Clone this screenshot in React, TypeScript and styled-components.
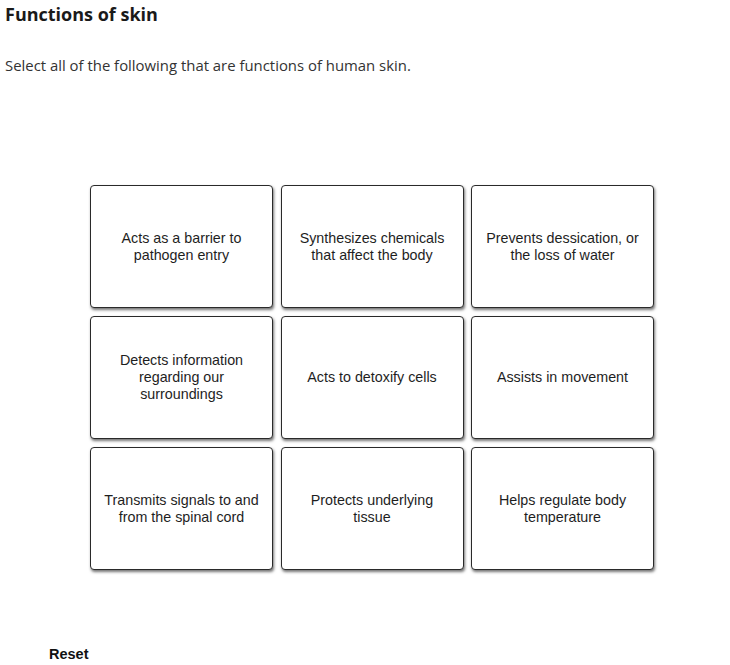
import React from "react"
import styled, { createGlobalStyle } from "styled-components"

const GlobalStyle = createGlobalStyle`
  body {
    margin: 0;
    background: #fff;
    font-family: "Open Sans", sans-serif;
    color: #222;
  }
`

const Page = styled.div`
  width: 730px;
  height: 665px;
  position: relative;
  overflow: hidden;
`

const Title = styled.h1`
  font-family: "Open Sans", sans-serif;
  font-size: 18px;
  font-weight: 700;
  color: #1a1a1a;
  margin: 0;
  padding: 3px 0 0 5px;
  line-height: 22px;
`

const Prompt = styled.p`
  font-family: "Open Sans", sans-serif;
  font-size: 14.9px;
  color: #333;
  margin: 0;
  padding: 30px 0 0 5px;
  line-height: 20px;
`

const Grid = styled.div`
  display: grid;
  grid-template-columns: repeat(3, 183px);
  grid-auto-rows: 123px;
  column-gap: 7.5px;
  row-gap: 8px;
  margin: 110px 0 0 90px;
`

const Card = styled.div`
  box-sizing: border-box;
  background: #fff;
  border: 1px solid #2a2a2a;
  border-radius: 4px;
  box-shadow: 1px 2px 3px rgba(0, 0, 0, 0.55);
  display: flex;
  align-items: center;
  justify-content: center;
  text-align: center;
  padding: 0 12px;
  font-family: "Liberation Sans", Arial, sans-serif;
  font-size: 14.3px;
  line-height: 17px;
  color: #1e1e1e;
`

const ResetButton = styled.button`
  background: none;
  border: none;
  padding: 0;
  margin: 76px 0 0 49px;
  font-family: "Liberation Sans", Arial, sans-serif;
  font-weight: bold;
  font-size: 14.5px;
  color: #111;
  cursor: pointer;
`

const options = [
  "Acts as a barrier to pathogen entry",
  "Synthesizes chemicals that affect the body",
  "Prevents dessication, or the loss of water",
  "Detects information regarding our surroundings",
  "Acts to detoxify cells",
  "Assists in movement",
  "Transmits signals to and from the spinal cord",
  "Protects underlying tissue",
  "Helps regulate body temperature",
]

export default function App() {
  return (
    <Page>
      <GlobalStyle />
      <Title>Functions of skin</Title>
      <Prompt>Select all of the following that are functions of human skin.</Prompt>
      <Grid>
        {options.map((o) => (
          <Card key={o}>{o}</Card>
        ))}
      </Grid>
      <ResetButton>Reset</ResetButton>
    </Page>
  )
}
